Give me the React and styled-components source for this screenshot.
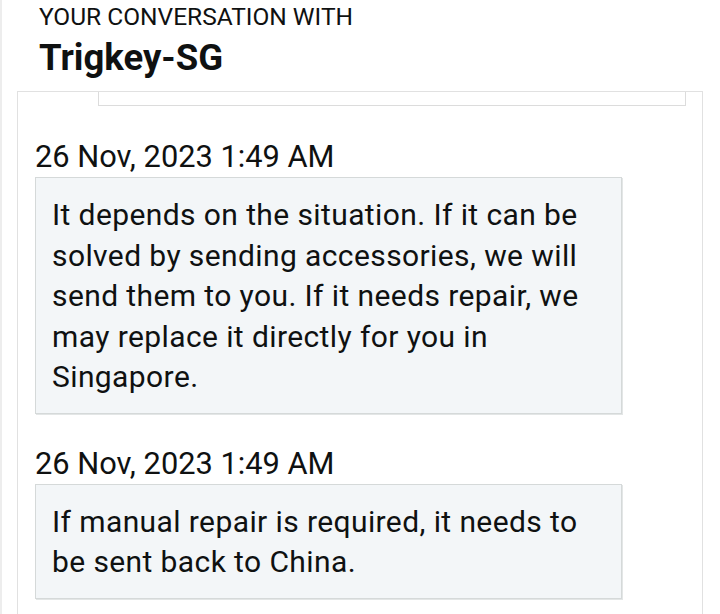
import React from "react";
import styled, { createGlobalStyle } from "styled-components";

const Global = createGlobalStyle`
  html, body { margin: 0; padding: 0; background: #fff; }
  body { font-family: Roboto, "Liberation Sans", sans-serif; color: #0f1111; }
`;

const Page = styled.div`
  height: 614px;
  overflow: hidden;
  border-left: 2px solid #ededed;
  box-sizing: border-box;
`;

const Header = styled.header`
  padding: 3px 0 0 37px;
`;

const Kicker = styled.div`
  font-size: 24.5px;
  line-height: 28px;
  font-weight: 400;
  text-transform: uppercase;
`;

const Title = styled.h1`
  margin: 5px 0 0;
  font-size: 36.5px;
  line-height: 44px;
  font-weight: 700;
`;

const Panel = styled.section`
  margin: 11px 0 0 15px;
  width: 686px;
  box-sizing: border-box;
  border: 1px solid #e1e1e1;
  border-bottom: none;
  padding: 0 0 40px 17px;
  min-height: 600px;
`;

const Stub = styled.div`
  margin: 0 16px 0 63px;
  height: 13px;
  border: 1px solid #dcdcdc;
  border-top: none;
`;

const Thread = styled.div`
  display: flex;
  flex-direction: column;
  gap: 33px;
  padding-top: 34px;
`;

const Message = styled.div`
  display: flex;
  flex-direction: column;
  gap: 3px;
`;

const Stamp = styled.div`
  font-size: 30.8px;
  line-height: 34px;
`;

const Bubble = styled.div`
  width: 587px;
  box-sizing: border-box;
  background: #f3f6f8;
  border: 1px solid #d5d9d9;
  box-shadow: 1px 1px 0 #e3e6e6;
  padding: 17px 16px 15px;
  font-size: 30px;
  letter-spacing: 0.4px;
  line-height: 40.5px;
`;

const messages = [
  {
    time: "26 Nov, 2023 1:49 AM",
    text: "It depends on the situation. If it can be solved by sending accessories, we will send them to you. If it needs repair, we may replace it directly for you in Singapore.",
  },
  {
    time: "26 Nov, 2023 1:49 AM",
    text: "If manual repair is required, it needs to be sent back to China.",
  },
];

export default function App() {
  return (
    <>
      <Global />
      <Page>
        <Header>
          <Kicker>Your conversation with</Kicker>
          <Title>Trigkey-SG</Title>
        </Header>
        <Panel>
          <Stub />
          <Thread>
            {messages.map((m, i) => (
              <Message key={i}>
                <Stamp>{m.time}</Stamp>
                <Bubble>{m.text}</Bubble>
              </Message>
            ))}
          </Thread>
        </Panel>
      </Page>
    </>
  );
}
